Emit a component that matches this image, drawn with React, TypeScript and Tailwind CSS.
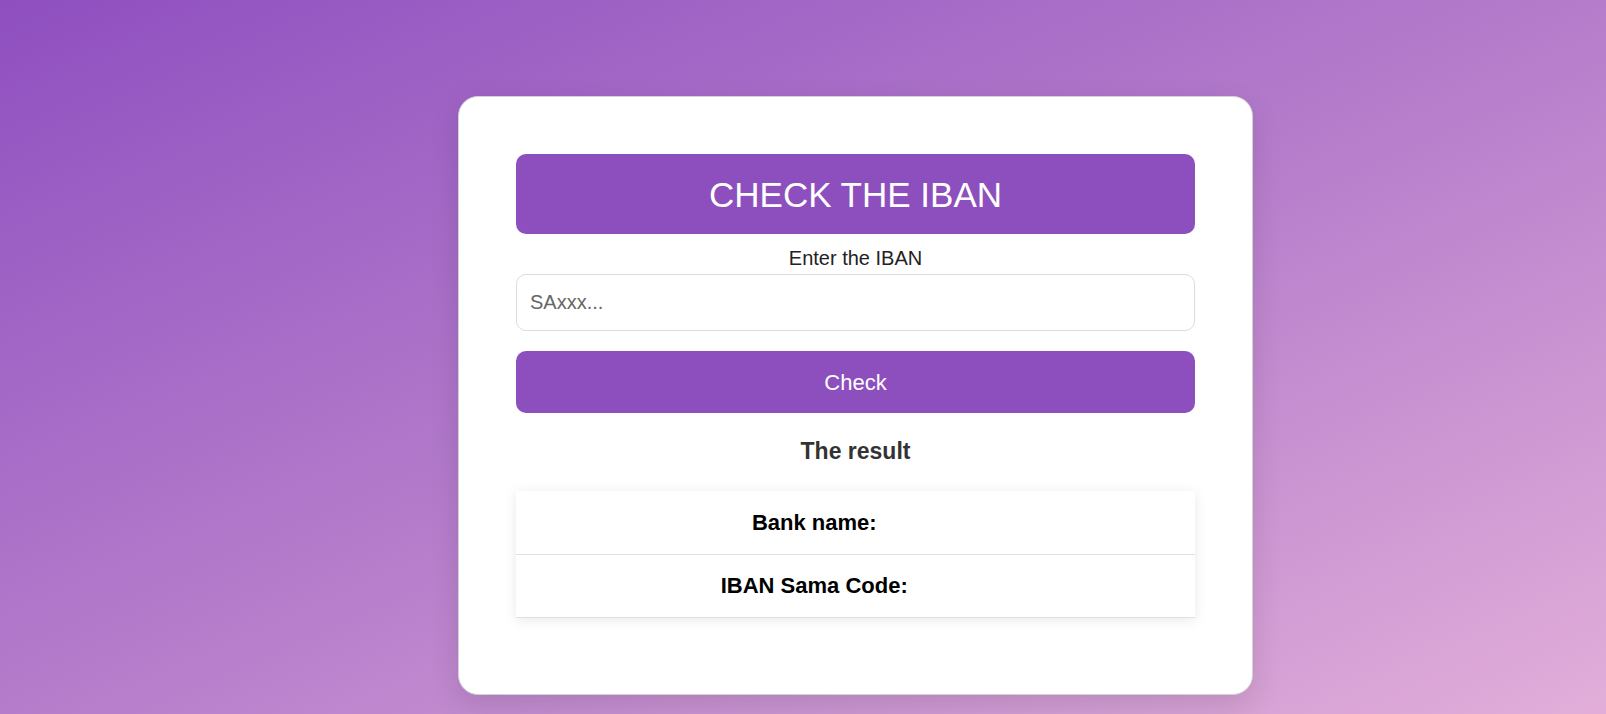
import React from 'react';

const rows = ['Bank name:', 'IBAN Sama Code:'];

export default function App() {
  return (
    <div
      className="min-h-screen w-full bg-gradient-to-br from-[#8f4fc0] via-[#b57ccb] to-[#e2aed9] flex justify-center pl-[105px] pt-[96px]"
      style={{ fontFamily: '"Liberation Sans", Arial, sans-serif' }}
    >
      <div className="w-[795px] h-[599px] bg-white rounded-[20px] border border-[#d4d0d8] shadow-[0_10px_30px_rgba(0,0,0,0.12)] px-[57px] pt-[57px]">
        {/* Title */}
        <div className="h-[80px] rounded-[10px] bg-[#8c4fbd] flex items-center justify-center text-white text-[35px] leading-none">
          CHECK THE IBAN
        </div>

        {/* Form */}
        <label className="block text-center text-[20px] leading-[23px] text-[#222] mt-[13px] mb-[4px]">
          Enter the IBAN
        </label>
        <input
          type="text"
          placeholder="SAxxx..."
          className="block w-full h-[57px] rounded-[10px] border border-[#dcdcdc] px-[13px] text-[20px] text-[#333] placeholder:text-[#666] outline-none"
        />
        <button className="mt-[20px] w-full h-[62px] rounded-[10px] bg-[#8c4fbd] text-white text-[22px]">
          Check
        </button>

        {/* Result */}
        <h2 className="mt-[24px] text-center text-[23px] leading-[28px] font-bold text-[#333]">
          The result
        </h2>
        <table className="mt-[26px] w-full border-collapse bg-white shadow-[0_2px_12px_rgba(0,0,0,0.09)]">
          <tbody>
            {rows.map((r) => (
              <tr key={r} className="h-[63px] border-b border-[#e0e0e0]">
                <th className="px-[15px] text-[22px] font-bold text-black">{r}</th>
                <td className="px-[15px]"></td>
              </tr>
            ))}
          </tbody>
        </table>
      </div>
    </div>
  );
}
